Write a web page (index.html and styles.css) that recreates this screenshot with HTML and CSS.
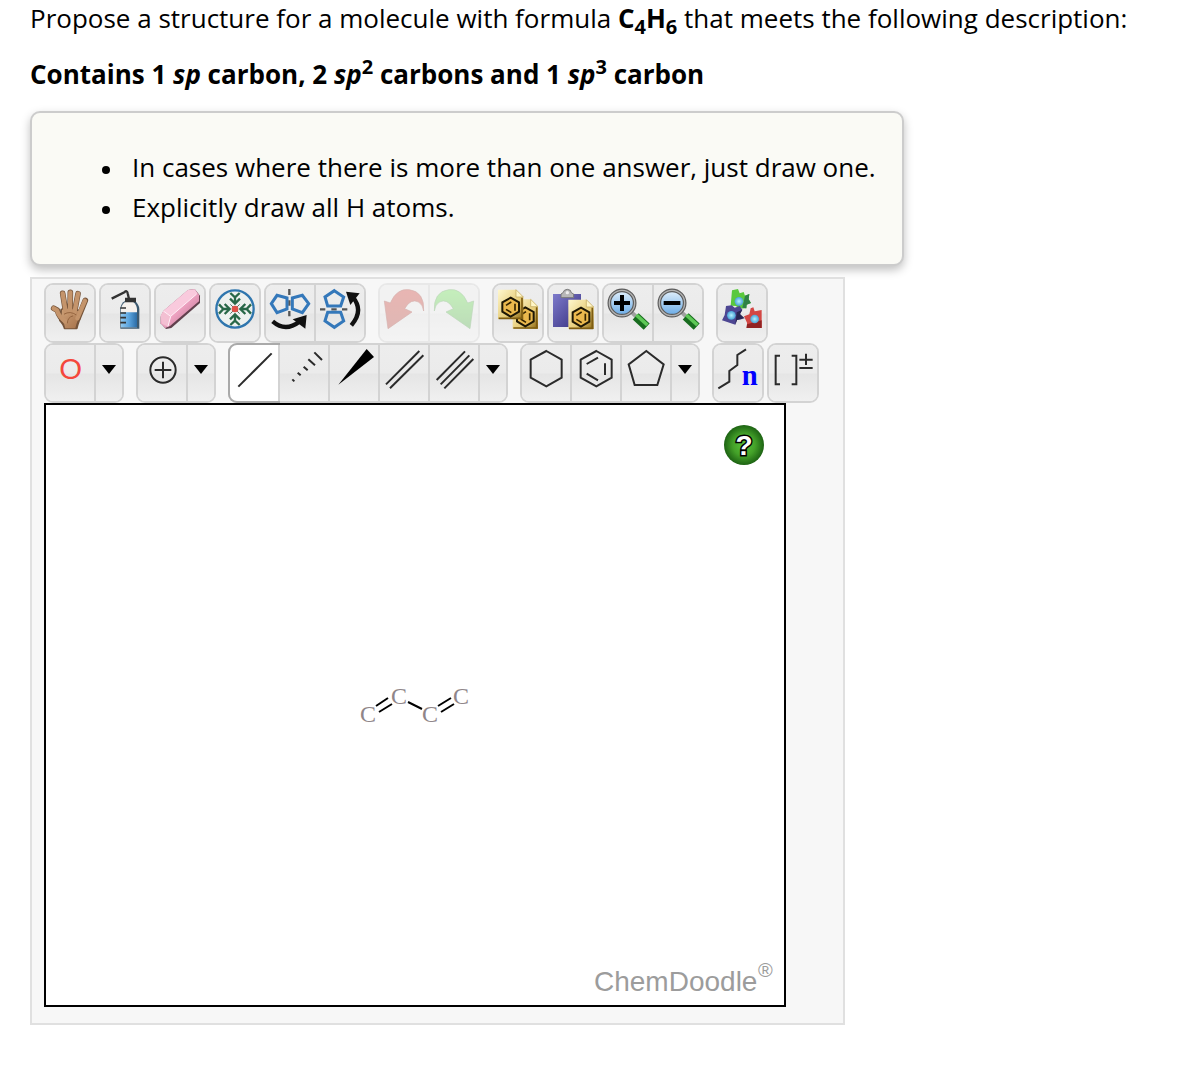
FILE: index.html
```html
<!DOCTYPE html>
<html lang="en">
<head>
<meta charset="utf-8">
<meta name="viewport" content="width=device-width, initial-scale=1">
<title>Propose a structure</title>
<link rel="stylesheet" href="styles.css">
</head>
<body>
<main class="question">
  <p class="prompt">Propose a structure for a molecule with formula <b>C<sub>4</sub>H<sub>6</sub></b> that meets the following description:</p>
  <p class="prompt prompt-strong">Contains 1 <i>sp</i> carbon, 2 <i>sp</i><sup>2</sup> carbons and 1 <i>sp</i><sup>3</sup> carbon</p>

  <section class="notes">
    <ul class="notes-list">
      <li>In cases where there is more than one answer, just draw one.</li>
      <li>Explicitly draw all H atoms.</li>
    </ul>
  </section>

  <section class="sketcher" aria-label="Structure editor">
    <svg class="shared" aria-hidden="true">
      <defs>
        <linearGradient id="gold" x1="0" y1="0" x2="1" y2="1"><stop offset="0" stop-color="#fff8cf"/><stop offset=".6" stop-color="#e6cc78"/><stop offset="1" stop-color="#8a6510"/></linearGradient>
        <linearGradient id="pink" x1="0" y1="0" x2="1" y2="1"><stop offset="0" stop-color="#ffdce9"/><stop offset=".5" stop-color="#efa3c2"/><stop offset="1" stop-color="#b06a88"/></linearGradient>
        <linearGradient id="violet" x1="0" y1="0" x2="1" y2="1"><stop offset="0" stop-color="#7d7acb"/><stop offset="1" stop-color="#37307f"/></linearGradient>
        <linearGradient id="water" x1="0" y1="0" x2="1" y2="0"><stop offset="0" stop-color="#8ec8f0"/><stop offset=".5" stop-color="#5ba4de"/><stop offset="1" stop-color="#2b6ca6"/></linearGradient>
        <linearGradient id="skin" x1="0" y1="0" x2="1" y2="1"><stop offset="0" stop-color="#cda078"/><stop offset="1" stop-color="#a8744c"/></linearGradient>
        <linearGradient id="undo" x1="0" y1="0" x2="0" y2="1"><stop offset="0" stop-color="#d4554e"/><stop offset="1" stop-color="#bd5a52"/></linearGradient>
        <linearGradient id="redo" x1="0" y1="0" x2="0" y2="1"><stop offset="0" stop-color="#7be463"/><stop offset="1" stop-color="#66b45d"/></linearGradient>
        <linearGradient id="lens" x1="0" y1="0" x2="0" y2="1"><stop offset="0" stop-color="#e4f1fc"/><stop offset="1" stop-color="#68aae6"/></linearGradient>
        <radialGradient id="helpfill"><stop offset="0" stop-color="#5bc43c"/><stop offset=".55" stop-color="#44a129"/><stop offset="1" stop-color="#1d6313"/></radialGradient>
        <radialGradient id="bead"><stop offset="0" stop-color="#b5f2ff"/><stop offset="1" stop-color="#4aa2d6"/></radialGradient>
        <g id="page">
          <path d="M0 0H54L76 22V88H0Z" fill="url(#gold)"/>
          <path d="M72 24V86H2" fill="none" stroke="#7e5d12" stroke-width="5"/>
          <path d="M54 0V22H76Z" fill="#fff6c8" stroke="#bda357" stroke-width="2"/>
          <path d="M38 24L63 38V66L38 81L13 66V38Z" fill="#eab84d" stroke="#1d1705" stroke-width="6"/>
          <path d="M24 47L40 37M24 59L40 69M51 42V63" stroke="#352400" stroke-width="5"/>
        </g>
        <g id="magnifier">
          <path d="M72 71L90 88" stroke="#a0a0a0" stroke-width="12"/>
          <path d="M83 82L116 113" stroke="#186c1f" stroke-width="26"/>
          <path d="M85 78L118 108" stroke="#5ec957" stroke-width="11"/>
          <circle cx="42" cy="42" r="38" fill="url(#lens)" stroke="#5c5c5c" stroke-width="11"/>
          <circle cx="42" cy="42" r="38" fill="none" stroke="#b3b3b3" stroke-width="4"/>
        </g>
      </defs>
    </svg>

    <div class="toolbar">
      <div class="group"><button class="tool" aria-label="Move" type="button"><svg class="icon" viewBox="0 0 120 120">
        <g fill="none" stroke-linecap="round" stroke-linejoin="round">
          <path d="M48 75L38 13M60 70L61 10M73 72L84 14M84 88L106 34M48 98Q28 88 22 64L11 58" stroke="#76553b" stroke-width="17"/>
          <path d="M34 62Q60 52 88 66L88 92Q82 108 80 118H44Q42 108 30 94Z" fill="#76553b" stroke="#76553b" stroke-width="6"/>
          <path d="M36 62Q60 54 85 67L84 92Q78 106 76 118H46Q44 104 34 94Z" fill="url(#skin)"/>
          <path d="M48 75L38 13M60 70L61 10M73 72L84 14M82 88L105 35M48 98Q28 86 21 64L11 58" stroke="#c4946b" stroke-width="13"/>
          <path d="M43 75Q60 65 78 77M52 102Q53 84 68 81" stroke="#95643f" stroke-width="3"/>
        </g></svg></button></div>
      <div class="group"><button class="tool" aria-label="Clear" type="button"><svg class="icon" viewBox="0 0 120 120">
        <path d="M46 58Q48 43 60 36H90Q102 46 103 60V119H46Z" fill="#3d5a70"/>
        <path d="M48 60Q50 45 62 38H84Q95 47 96 60V115H48Z" fill="#f6f1ed"/>
        <path d="M48 70H96V115H48Z" fill="url(#water)"/>
        <path d="M60 26H93V40H60Z" fill="#333"/>
        <path d="M20 29L58 10Q66 2 68 13L72 30" fill="none" stroke="#333" stroke-width="7"/>
        <path d="M46 57H63M46 72H63M46 86H63M46 101H63" stroke="#333" stroke-width="5"/></svg></button></div>
      <div class="group"><button class="tool" aria-label="Erase" type="button"><svg class="icon" viewBox="0 0 120 120">
        <path d="M2 83L10 66L84 3L104 0L120 20V42L34 117L18 120L2 103Z" fill="#61404d"/>
        <path d="M2 80L10 66L84 3L104 1L117 17V37L30 111L16 117L2 103Z" fill="url(#pink)"/>
        <path d="M10 66L84 3L104 1L112 13L32 82Z" fill="#f9cadd"/>
        <path d="M2 82L10 66L32 82L24 113L6 104Z" fill="#f3bfd2"/>
        <path d="M10 66L32 82L24 112M32 82L110 15" fill="none" stroke="#fff0f7" stroke-width="3"/></svg></button></div>
      <div class="group"><button class="tool" aria-label="Clean" type="button"><svg class="icon" viewBox="0 0 120 120">
        <circle cx="60" cy="60" r="56" fill="#edf1ef" stroke="#2f76ae" stroke-width="7"/>
        <g fill="none" stroke="#286848" stroke-width="7">
          <path d="M60 20V42M46 12L60 25L74 12M45 29L60 44L75 29"/>
          <path d="M60 100V78M46 108L60 95L74 108M45 91L60 76L75 91"/>
          <path d="M20 60H42M12 46L25 60L12 74M29 45L44 60L29 75"/>
          <path d="M100 60H78M108 46L95 60L108 74M91 45L76 60L91 75"/>
        </g>
        <path d="M46 46L74 74M74 46L46 74" stroke="#587869" stroke-width="3"/>
        <circle cx="60" cy="60" r="10" fill="#df5148"/></svg></button></div>
      <div class="group">
        <button class="tool" aria-label="Flip horizontally" type="button"><svg class="icon" viewBox="0 0 120 120">
          <path d="M58 0V18M58 34V50M58 66V82" stroke="#555" stroke-width="7"/>
          <path d="M4 44L21 19L51 27V60L21 71ZM116 44L97 19L67 27V60L97 71Z" fill="none" stroke="#3478ba" stroke-width="9"/>
          <path d="M8 97Q46 130 88 98" fill="none" stroke="#111" stroke-width="13"/>
          <path d="M110 78L106 119L68 91Z" fill="#111"/></svg></button>
        <button class="tool" aria-label="Flip vertically" type="button"><svg class="icon" viewBox="0 0 120 120">
          <path d="M0 61H16M34 61H50M66 61H82" stroke="#555" stroke-width="7"/>
          <path d="M43 5L71 24L62 51H23L15 24ZM23 70H62L71 96L43 115L15 96Z" fill="none" stroke="#3478ba" stroke-width="9"/>
          <path d="M94 109Q132 65 99 25" fill="none" stroke="#111" stroke-width="13"/>
          <path d="M78 8L119 13L91 48Z" fill="#111"/></svg></button>
      </div>
      <div class="group group-apart group-off">
        <button class="tool" aria-label="Undo" type="button" disabled><svg class="icon" viewBox="0 0 120 120">
          <path d="M1 36L12 119L84 69L62 59Q80 27 104 39Q117 48 119 66Q122 8 76 2Q38 -3 19 42Z" fill="url(#undo)" stroke="#a84d46" stroke-width="2"/></svg></button>
        <button class="tool" aria-label="Redo" type="button" disabled><svg class="icon" viewBox="0 0 120 120">
          <path d="M119 36L108 119L36 69L58 59Q40 27 16 39Q3 48 1 66Q-2 8 44 2Q82 -3 101 42Z" fill="url(#redo)" stroke="#68a662" stroke-width="2"/></svg></button>
      </div>
      <div class="group group-apart"><button class="tool" aria-label="Copy" type="button"><svg class="icon" viewBox="0 0 120 120">
        <use href="#page" x="44" y="31"/><use href="#page" x="0" y="2"/></svg></button></div>
      <div class="group"><button class="tool" aria-label="Paste" type="button"><svg class="icon" viewBox="0 0 120 120">
        <path d="M0 15H84V114H0Z" fill="url(#violet)"/>
        <path d="M24 26V15Q32 12 34 4Q43 -2 52 4Q53 13 62 15V26Z" fill="#b8b8b8" stroke="#777" stroke-width="3"/>
        <circle cx="43" cy="11" r="5" fill="#eee"/>
        <use href="#page" x="46" y="32"/></svg></button></div>
      <div class="group">
        <button class="tool" aria-label="Zoom in" type="button"><svg class="icon" viewBox="0 0 120 120">
          <use href="#magnifier"/><path d="M18 42H66M42 18V66" stroke="#000" stroke-width="12"/></svg></button>
        <button class="tool" aria-label="Zoom out" type="button"><svg class="icon" viewBox="0 0 120 120">
          <use href="#magnifier"/><path d="M17 42H67" stroke="#000" stroke-width="12"/></svg></button>
      </div>
      <div class="group group-apart"><button class="tool" aria-label="Templates" type="button"><svg class="icon" viewBox="0 0 120 120">
        <path d="M30 4L48 0L53 13L65 9L69 20L82 15L80 31L87 42L74 47L73 58L50 59L42 51L26 50Z" fill="#5ac83e"/>
        <path d="M69 20L82 15L80 31L87 42L74 47L73 58L61 56Z" fill="#2f8247"/>
        <path d="M12 51L29 49L38 56L53 51L61 62L54 75L62 90L45 93L40 107L0 94L8 78Z" fill="#4d4692"/>
        <path d="M40 107L44 70L61 62L54 75L68 88L45 93Z" fill="#292653"/>
        <path d="M86 58L94 55L98 67L119 63V117H75V101L66 82L82 76Z" fill="#d34744"/>
        <path d="M75 106L119 94V117H73Z" fill="#922323"/>
        <circle cx="51" cy="37" r="13" fill="url(#bead)"/><circle cx="28" cy="79" r="13" fill="url(#bead)"/><circle cx="98" cy="90" r="13" fill="url(#bead)"/></svg></button></div>
    </div>

    <div class="toolbar">
      <div class="group">
        <button class="tool" aria-label="Oxygen" type="button"><svg class="icon" viewBox="0 0 120 120"><text class="glyph-o" x="62" y="90">O</text></svg></button>
        <button class="tool tool-menu" aria-label="More elements" type="button"><svg class="caret" viewBox="0 0 14 10"><path d="M0 0H14L7 9Z"/></svg></button>
      </div>
      <div class="group group-apart">
        <button class="tool" aria-label="Increase charge" type="button"><svg class="icon line" viewBox="0 0 120 120"><circle cx="63" cy="63" r="38"/><path d="M38 63H88M63 38V88"/></svg></button>
        <button class="tool tool-menu" aria-label="More attributes" type="button"><svg class="caret" viewBox="0 0 14 10"><path d="M0 0H14L7 9Z"/></svg></button>
      </div>
      <div class="group group-apart">
        <button class="tool tool-active" aria-label="Single bond" aria-pressed="true" type="button"><svg class="icon line" viewBox="0 0 120 120"><path d="M13 113L113 13"/></svg></button>
        <button class="tool" aria-label="Recessed bond" type="button"><svg class="icon line" viewBox="0 0 120 120"><path d="M91 10L114 33M73 31L93 49M59 53L71 64M41 71L50 79M25 91L31 97"/></svg></button>
        <button class="tool" aria-label="Protruding bond" type="button"><svg class="icon" viewBox="0 0 120 120"><path d="M13 107L98 0L120 24Z"/></svg></button>
        <button class="tool" aria-label="Double bond" type="button"><svg class="icon line" viewBox="0 0 120 120"><path d="M6 106L106 6M18 118L118 19"/></svg></button>
        <button class="tool" aria-label="Triple bond" type="button"><svg class="icon line" viewBox="0 0 120 120"><path d="M8 93L93 7M20 106L106 19M31 118L118 30"/></svg></button>
        <button class="tool tool-menu" aria-label="More bonds" type="button"><svg class="caret" viewBox="0 0 14 10"><path d="M0 0H14L7 9Z"/></svg></button>
      </div>
      <div class="group group-apart">
        <button class="tool" aria-label="Cyclohexane ring" type="button"><svg class="icon line" viewBox="0 0 120 120"><path d="M61 6L107 32V86L61 112L14 86V32Z"/></svg></button>
        <button class="tool" aria-label="Benzene ring" type="button"><svg class="icon line" viewBox="0 0 120 120"><path d="M61 6L107 32V86L61 112L14 86V32ZM32 45L66 26M87 43V78M32 74L66 94"/></svg></button>
        <button class="tool" aria-label="Cyclopentane ring" type="button"><svg class="icon line" viewBox="0 0 120 120"><path d="M61 6L113 46L94 108H26L8 46Z"/></svg></button>
        <button class="tool tool-menu" aria-label="More rings" type="button"><svg class="caret" viewBox="0 0 14 10"><path d="M0 0H14L7 9Z"/></svg></button>
      </div>
      <div class="group group-apart"><button class="tool" aria-label="Repeating unit" type="button"><svg class="icon line" viewBox="0 0 120 120"><path d="M84 1L58 18V48L34 66V98L1 118"/><text class="glyph-n" x="95" y="108">n</text></svg></button></div>
      <div class="group"><button class="tool" aria-label="Bracket charge" type="button"><svg class="icon line" viewBox="0 0 120 120"><path d="M21 20H8V106H21M56 20H70V106H56M79 32H119M99 14V48M79 57H119"/></svg></button></div>
    </div>

    <div class="canvas">
      <svg class="drawing" viewBox="0 0 738 600" role="img" aria-label="Four carbon chain">
        <path class="bond" d="M330 301L342 293M333 307L346 299M362 297L376 304M392 301L405 293M395 307L408 299"/>
        <g class="atom"><text x="322" y="317">C</text><text x="353" y="299">C</text><text x="384" y="317">C</text><text x="415" y="299">C</text></g>
        <text class="brand" x="548" y="586">ChemDoodle</text><text class="brand-mark" x="712" y="572">®</text>
      </svg>
      <button class="help" aria-label="Help" type="button"><svg viewBox="0 0 40 40"><circle cx="20" cy="20" r="20" fill="url(#helpfill)"/><text x="20" y="30">?</text></svg></button>
    </div>
  </section>
</main>
</body>
</html>
```
FILE: styles.css
```css
* {
  box-sizing: border-box;
}

body {
  margin: 0;
  background: #fff;
  color: #000;
  font-family: "Open Sans", "Noto Sans", sans-serif;
  font-size: 26px;
  line-height: 40px;
}

.question {
  padding: 0 30px 62px;
}

.prompt {
  margin: 0 0 20px;
  line-height: 36px;
}

.prompt-strong {
  margin-bottom: 19px;
  font-weight: 700;
}

sub,
sup {
  font-size: 20px;
  line-height: 0;
}

.notes {
  width: fit-content;
  margin-bottom: 11px;
  padding: 34px 26px 37px 70px;
  border: 2px solid #ccc;
  border-radius: 10px;
  background: #fafaf5;
  box-shadow: 0 4px 10px rgba(0, 0, 0, 0.25);
}

.notes-list {
  margin: 0;
  padding: 0;
  list-style: none;
}

.notes-list li {
  display: flex;
  gap: 22px;
}

.notes-list li::before {
  flex: none;
  width: 8px;
  height: 8px;
  margin-top: 19px;
  border-radius: 50%;
  background: #000;
  content: "";
}

.sketcher {
  max-width: 815px;
  padding: 4px 12px 16px;
  border: 2px solid #e0e0e0;
  background: #f7f7f7;
}

.shared {
  display: block;
  width: 0;
  height: 0;
}

.toolbar {
  display: flex;
  flex-wrap: wrap;
  gap: 3px;
}

.group {
  display: flex;
  height: 60px;
  overflow: hidden;
  border: 2px solid #d3d3d3;
  border-radius: 9px;
}

.group-apart {
  margin-left: 9px;
}

.group-off {
  opacity: 0.4;
}

.tool {
  display: flex;
  width: 48px;
  padding: 4px;
  border: 0;
  background: linear-gradient(#ededed, #ebebeb 50%, #e5e5e5 52%, #f0f0f0);
}

.tool + .tool {
  width: 50px;
  border-left: 2px solid #d3d3d3;
}

.tool + .tool-menu {
  width: 28px;
  padding: 20px 6px 26px;
}

.tool-active {
  background: #fff;
  box-shadow: 0 0 0 2px #aaa;
}

.group:has(.tool-active) {
  overflow: visible;
}

.group:has(.tool-active) .tool-active {
  border-radius: 7px 0 0 7px;
}

.group:has(.tool-active) .tool + .tool {
  z-index: 1;
}

.group:has(.tool-active) .tool-menu {
  border-radius: 0 7px 7px 0;
}

.icon {
  display: block;
  width: 40px;
  height: 40px;
  overflow: visible;
}

.line {
  fill: none;
  stroke: #2b2b2b;
  stroke-width: 6;
}

.caret {
  width: 14px;
  height: 10px;
}

.glyph-o {
  fill: #f4483c;
  font: 88px "Liberation Sans", sans-serif;
  text-anchor: middle;
}

.glyph-n {
  fill: #00f;
  stroke: none;
  font: bold 86px "Liberation Serif", serif;
  text-anchor: middle;
}

.canvas {
  position: relative;
  max-width: 742px;
  border: 2px solid #000;
  background: #fff;
}

.drawing {
  display: block;
  width: 100%;
}

.bond {
  stroke: #000;
  stroke-width: 2;
}

.atom {
  fill: #8f8689;
  font: 24px "Liberation Serif", serif;
  text-anchor: middle;
}

.brand,
.brand-mark {
  fill: #9c9c9c;
  font: 28px "Liberation Sans", sans-serif;
}

.brand-mark {
  font-size: 20px;
}

.help {
  position: absolute;
  top: 20px;
  right: 20px;
  width: 40px;
  height: 40px;
  padding: 0;
  border: 0;
  border-radius: 50%;
  background: none;
}

.help svg {
  display: block;
}

.help text {
  fill: #fff;
  stroke: #000;
  stroke-width: 3;
  paint-order: stroke;
  font: bold 28px "Liberation Sans", sans-serif;
  text-anchor: middle;
}
```
